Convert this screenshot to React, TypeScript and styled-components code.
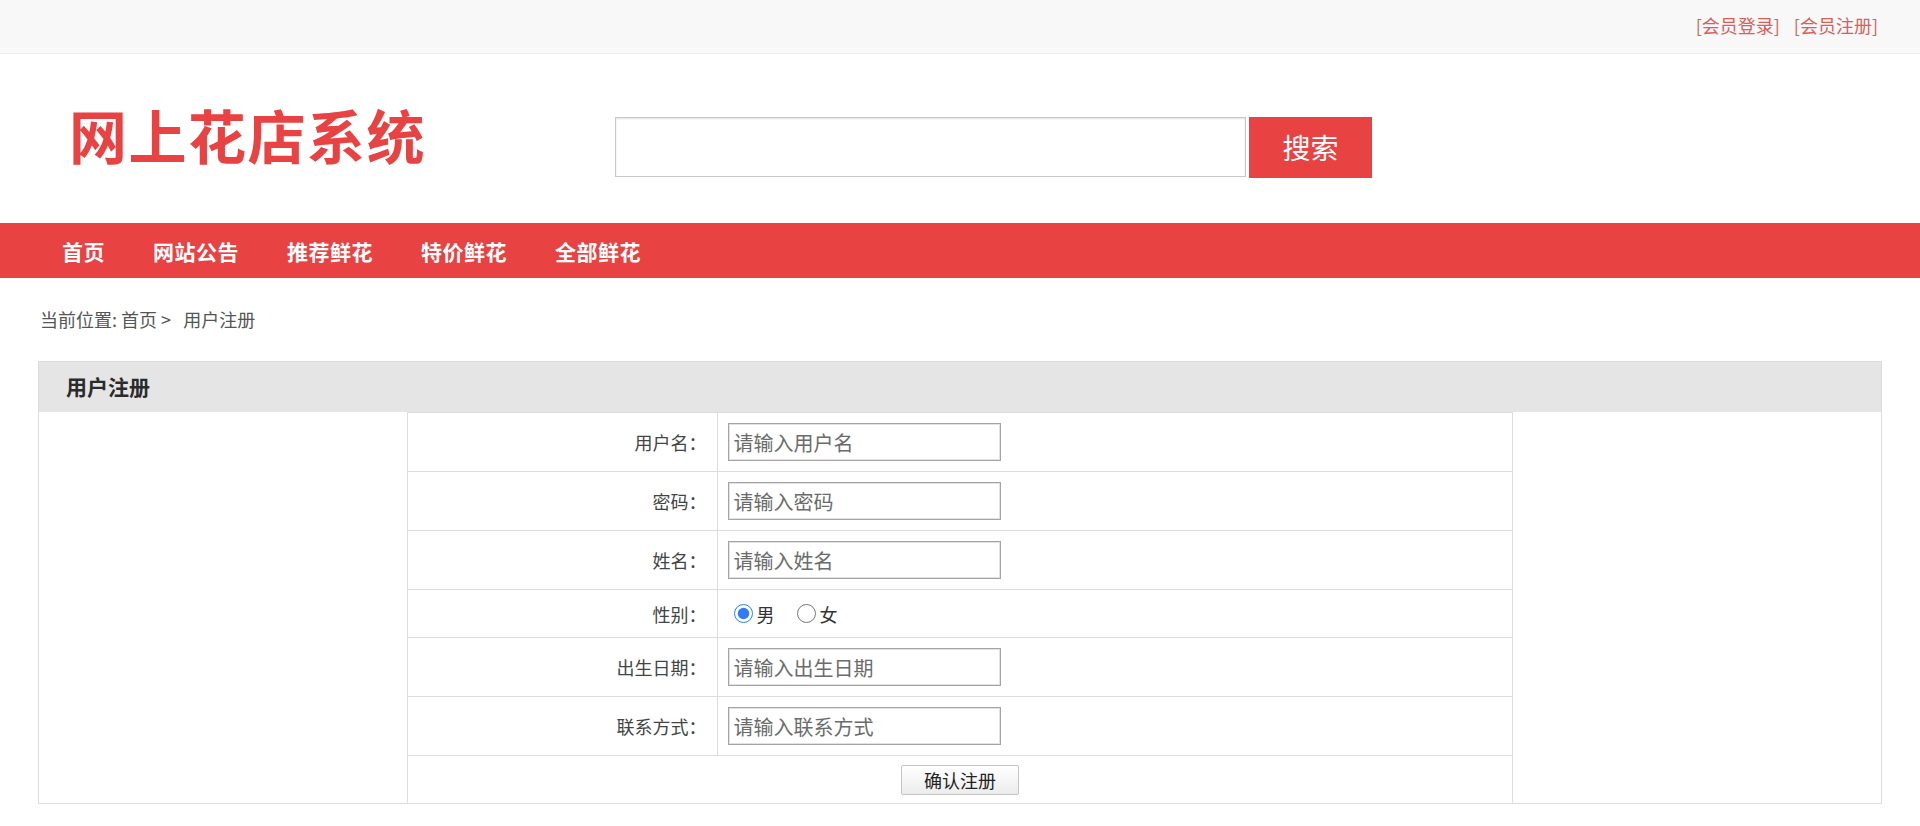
import React from 'react';
import styled, { createGlobalStyle } from 'styled-components';

const GlobalStyle = createGlobalStyle`
  html, body {
    margin: 0;
    padding: 0;
    background: #fff;
  }
  body {
    font-family: "Noto Sans CJK SC", "Noto Sans", "Liberation Sans", sans-serif;
    color: #333;
  }
  * {
    box-sizing: border-box;
  }
`;

const RED = '#e84242';

const TopBar = styled.div`
  height: 54px;
  background: #f8f8f8;
  border-bottom: 1px solid #eeeeee;
  display: flex;
  align-items: center;
  justify-content: flex-end;
  padding: 0 42px 4px 0;
  gap: 14px;
`;

const TopLink = styled.a`
  font-size: 18px;
  color: #d8605b;
  text-decoration: none;
  cursor: pointer;
`;

const Header = styled.div`
  height: 169px;
  display: flex;
  align-items: center;
  padding-left: 69px;
`;

const Logo = styled.h1`
  width: 546px;
  margin: 0 0 9px;
  font-size: 58px;
  font-weight: 700;
  line-height: 1;
  color: ${RED};
  letter-spacing: 1.5px;
`;

const SearchForm = styled.form`
  display: flex;
  align-items: stretch;
  gap: 3px;
  margin-top: 17px;
`;

const SearchInput = styled.input`
  width: 631px;
  height: 60px;
  border: 1px solid #c8c8c8;
  box-shadow: inset 0 1px 2px rgba(0, 0, 0, 0.12);
  padding: 0 10px;
  font-size: 20px;
  outline: none;
`;

const SearchButton = styled.button`
  width: 123px;
  height: 61px;
  border: none;
  background: ${RED};
  color: #fff;
  font-family: inherit;
  font-size: 28px;
  cursor: pointer;
`;

const NavBar = styled.nav`
  height: 55px;
  background: ${RED};
  display: flex;
  align-items: center;
  padding-left: 62px;
  gap: 48px;
`;

const NavItem = styled.a`
  color: #fff;
  font-size: 21px;
  font-weight: 700;
  letter-spacing: 0.5px;
  text-decoration: none;
  cursor: pointer;
`;

const Breadcrumb = styled.div`
  height: 83px;
  display: flex;
  align-items: center;
  padding: 0 40px 2px;
  font-size: 18px;
  color: #555;
  white-space: pre;
`;

const Panel = styled.section`
  margin: 0 38px;
  border: 1px solid #dddddd;
`;

const PanelHeader = styled.div`
  height: 50px;
  background: #e5e5e5;
  display: flex;
  align-items: center;
  padding: 0 0 2px 27px;
  font-size: 21px;
  font-weight: 700;
  color: #2b2b2b;
`;

const FormTable = styled.table`
  width: 60%;
  margin: 0 auto;
  border-collapse: collapse;

  td {
    border: 1px solid #dddddd;
    padding: 10px;
    vertical-align: middle;
  }

  tr:last-child td {
    border-bottom: none;
    padding: 9px 10px 8px;
  }
`;

const LabelCell = styled.td`
  width: 28%;
  text-align: right;
  font-size: 18px;
  color: #444;
`;

const FieldCell = styled.td<{ $center?: boolean }>`
  text-align: ${(p) => (p.$center ? 'center' : 'left')};
  font-size: 18px;
  color: #333;
`;

const TextInput = styled.input`
  display: block;
  width: 273px;
  height: 38px;
  border: 1px solid #a4a4a4;
  box-shadow: inset 0 0 0 1px #e2e2e2;
  padding: 0 5px;
  font-family: inherit;
  font-size: 20px;
  color: #333;
  outline: none;

  &::placeholder {
    color: #6b6b6b;
  }
`;

const RadioGroup = styled.div`
  display: flex;
  align-items: center;
  height: 27px;
`;

const RadioLabel = styled.label<{ $first?: boolean }>`
  display: flex;
  align-items: center;
  margin-left: ${(p) => (p.$first ? '0' : '16px')};
  cursor: pointer;
`;

const Radio = styled.input`
  width: 19px;
  height: 19px;
  margin: 0 4px 0 6px;
  accent-color: #2f7cf6;
`;

const SubmitButton = styled.button`
  height: 30px;
  padding: 0 22px;
  font-family: inherit;
  font-size: 18px;
  color: #222;
  border: 1px solid #c4c4c4;
  border-radius: 2px;
  background: linear-gradient(#ffffff, #ececec);
  cursor: pointer;
`;

const textFields = [
  { label: '用户名：', placeholder: '请输入用户名', type: 'text' },
  { label: '密码：', placeholder: '请输入密码', type: 'password' },
  { label: '姓名：', placeholder: '请输入姓名', type: 'text' },
];

const moreFields = [
  { label: '出生日期：', placeholder: '请输入出生日期', type: 'text' },
  { label: '联系方式：', placeholder: '请输入联系方式', type: 'text' },
];

const navItems = ['首页', '网站公告', '推荐鲜花', '特价鲜花', '全部鲜花'];

const FieldRow: React.FC<{ label: string; placeholder: string; type: string }> = ({
  label,
  placeholder,
  type,
}) => (
  <tr>
    <LabelCell>{label}</LabelCell>
    <FieldCell>
      <TextInput type={type} placeholder={placeholder} />
    </FieldCell>
  </tr>
);

const App: React.FC = () => {
  return (
    <>
      <GlobalStyle />
      <TopBar>
        <TopLink>[会员登录]</TopLink>
        <TopLink>[会员注册]</TopLink>
      </TopBar>
      <Header>
        <Logo>网上花店系统</Logo>
        <SearchForm onSubmit={(e) => e.preventDefault()}>
          <SearchInput type="text" />
          <SearchButton type="submit">搜索</SearchButton>
        </SearchForm>
      </Header>
      <NavBar>
        {navItems.map((item) => (
          <NavItem key={item}>{item}</NavItem>
        ))}
      </NavBar>
      <Breadcrumb>{'当前位置: 首页 >   用户注册'}</Breadcrumb>
      <Panel>
        <PanelHeader>用户注册</PanelHeader>
        <FormTable>
          <tbody>
            {textFields.map((f) => (
              <FieldRow key={f.label} {...f} />
            ))}
            <tr>
              <LabelCell>性别：</LabelCell>
              <FieldCell>
                <RadioGroup>
                  <RadioLabel $first>
                    <Radio type="radio" name="sex" defaultChecked />男
                  </RadioLabel>
                  <RadioLabel>
                    <Radio type="radio" name="sex" />女
                  </RadioLabel>
                </RadioGroup>
              </FieldCell>
            </tr>
            {moreFields.map((f) => (
              <FieldRow key={f.label} {...f} />
            ))}
            <tr>
              <FieldCell colSpan={2} $center>
                <SubmitButton type="button">确认注册</SubmitButton>
              </FieldCell>
            </tr>
          </tbody>
        </FormTable>
      </Panel>
    </>
  );
};

export default App;
